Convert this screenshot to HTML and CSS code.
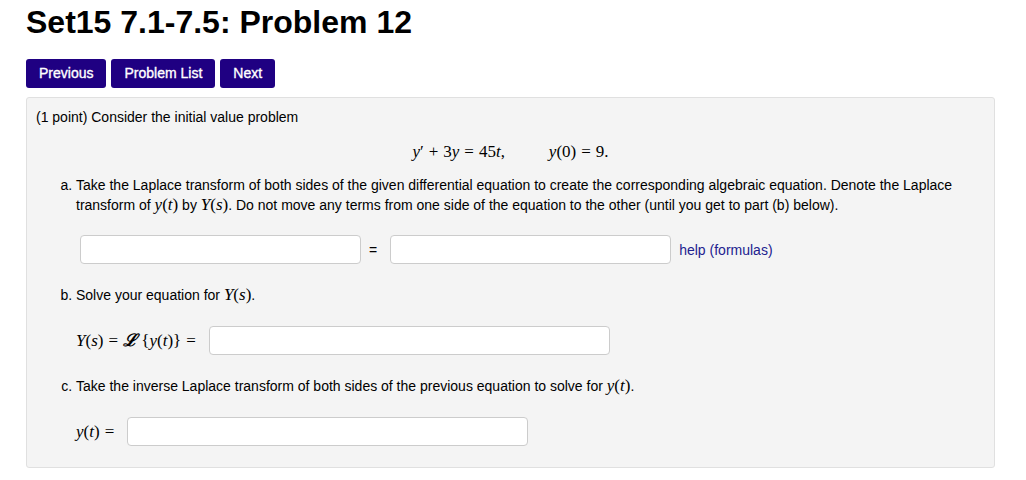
FILE: index.html
```html
<!DOCTYPE html>
<html lang="en">
<head>
    <meta charset="UTF-8">
    <title>Set15 7.1-7.5: Problem 12</title>
    <link rel="stylesheet" href="styles.css">
</head>
<body>
    <h1 class="problem-title">Set15 7.1-7.5: Problem 12</h1>

    <!-- Navegacion entre problemas -->
    <div class="nav-buttons">
        <a href="#">Previous</a>
        <a href="#">Problem List</a>
        <a href="#">Next</a>
    </div>

    <div class="problem-box">
        <p class="intro">(1 point) Consider the initial value problem</p>

        <div class="display-eq">
            <span class="math"><i>y</i>&#8242;<span class="op">+</span>3<i>y</i><span class="op">=</span>45<i>t</i>,</span>
            <span class="math eq-gap"><i>y</i>(0)<span class="op">=</span>9.</span>
        </div>

        <ol class="parts">
            <li>
                <p>Take the Laplace transform of both sides of the given differential equation to create the corresponding algebraic equation. Denote the Laplace transform of <span class="math"><i>y</i>(<i>t</i>)</span> by <span class="math"><i>Y</i>(<i>s</i>)</span>. Do not move any terms from one side of the equation to the other (until you get to part (b) below).</p>
                <div class="answer-row first-row">
                    <input type="text" class="answer wide">
                    <span class="equals">=</span>
                    <input type="text" class="answer wide">
                    <a href="#" class="help-link">help (formulas)</a>
                </div>
            </li>
            <li>
                <p>Solve your equation for <span class="math"><i>Y</i>(<i>s</i>)</span>.</p>
                <div class="answer-row">
                    <span class="math label"><i>Y</i>(<i>s</i>)<span class="op">=</span><span class="script-l">&#8466;</span> {<i>y</i>(<i>t</i>)}<span class="op">=</span></span>
                    <input type="text" class="answer long">
                </div>
            </li>
            <li>
                <p>Take the inverse Laplace transform of both sides of the previous equation to solve for <span class="math"><i>y</i>(<i>t</i>)</span>.</p>
                <div class="answer-row">
                    <span class="math label"><i>y</i>(<i>t</i>)<span class="op">=</span></span>
                    <input type="text" class="answer long">
                </div>
            </li>
        </ol>
    </div>
</body>
</html>
```

FILE: styles.css
```css
body {
    font-family: "Liberation Sans", Arial, sans-serif;
    font-size: 14px;
    color: #000;
    background-color: #fff;
    margin: 0;
    padding: 0 31px 0 26px;
}

.problem-title {
    font-size: 32px;
    font-weight: bold;
    margin: 4px 0 0 0;
    line-height: 36px;
}

.nav-buttons {
    display: flex;
    gap: 5px;
    margin-top: 19px;
}

.nav-buttons a {
    background-color: #1f0082;
    color: white;
    text-decoration: none;
    font-size: 14px;
    -webkit-text-stroke: 0.35px white;
    padding: 0 13px;
    height: 29px;
    line-height: 29px;
    border-radius: 3px;
}

.problem-box {
    margin-top: 9px;
    background-color: #f4f4f4;
    border: 1px solid #e0e0e0;
    border-radius: 3px;
    padding: 9px 9px 21px 9px;
    line-height: 20px;
}

.problem-box p {
    margin: 0;
}

.math {
    font-family: "Liberation Serif", "Times New Roman", serif;
    font-size: 17px;
}

.problem-box p .math {
    line-height: 1;
}

.op {
    margin: 0 5px;
}

.display-eq {
    text-align: center;
    margin: 15px 0 13px 0;
}

.eq-gap {
    margin-left: 40px;
}

.parts {
    list-style: lower-alpha;
    margin: 0;
    padding-left: 40px;
}

.parts li + li {
    margin-top: 21px;
}

.answer-row {
    display: flex;
    align-items: center;
    gap: 8px;
    margin-top: 21px;
}

.first-row {
    margin-left: 4px;
    margin-top: 20px;
}

.answer {
    background-color: white;
    border: 1px solid #ccc;
    border-radius: 4px;
    height: 29px;
    box-sizing: border-box;
    padding: 4px 6px;
}

.answer.wide {
    width: 281px;
}

.answer.long {
    width: 401px;
}

.equals {
    margin-right: 5px;
}

.help-link {
    color: #22228f;
    text-decoration: none;
}

.label {
    white-space: nowrap;
}

.script-l {
    font-style: italic;
    font-weight: bold;
}
```
